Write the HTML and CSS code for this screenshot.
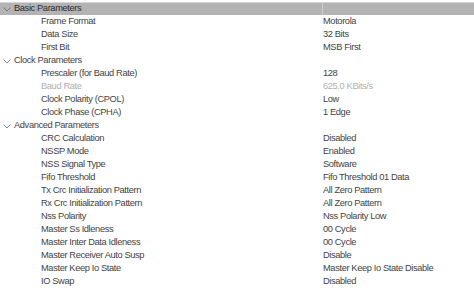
FILE: index.html
```html
<!DOCTYPE html>
<html>
<head>
<meta charset="utf-8">
<link rel="stylesheet" href="styles.css">
</head>
<body>
<div class="tree">
  <div class="row cat selected"><div class="name"><svg class="chev" width="8" height="5" viewBox="0 0 8 5"><path d="M0.5 0.5 L4 4 L7.5 0.5" fill="none" stroke="#7a7a7a" stroke-width="1"/></svg>Basic Parameters</div><div class="val"></div></div>
  <div class="row"><div class="name child">Frame Format</div><div class="val">Motorola</div></div>
  <div class="row"><div class="name child">Data Size</div><div class="val">32 Bits</div></div>
  <div class="row"><div class="name child">First Bit</div><div class="val">MSB First</div></div>
  <div class="row cat"><div class="name"><svg class="chev" width="8" height="5" viewBox="0 0 8 5"><path d="M0.5 0.5 L4 4 L7.5 0.5" fill="none" stroke="#8a8a8a" stroke-width="1"/></svg>Clock Parameters</div><div class="val"></div></div>
  <div class="row"><div class="name child">Prescaler (for Baud Rate)</div><div class="val">128</div></div>
  <div class="row disabled"><div class="name child">Baud Rate</div><div class="val">625.0 KBits/s</div></div>
  <div class="row"><div class="name child">Clock Polarity (CPOL)</div><div class="val">Low</div></div>
  <div class="row"><div class="name child">Clock Phase (CPHA)</div><div class="val">1 Edge</div></div>
  <div class="row cat"><div class="name"><svg class="chev" width="8" height="5" viewBox="0 0 8 5"><path d="M0.5 0.5 L4 4 L7.5 0.5" fill="none" stroke="#8a8a8a" stroke-width="1"/></svg>Advanced Parameters</div><div class="val"></div></div>
  <div class="row"><div class="name child">CRC Calculation</div><div class="val">Disabled</div></div>
  <div class="row"><div class="name child">NSSP Mode</div><div class="val">Enabled</div></div>
  <div class="row"><div class="name child">NSS Signal Type</div><div class="val">Software</div></div>
  <div class="row"><div class="name child">Fifo Threshold</div><div class="val">Fifo Threshold 01 Data</div></div>
  <div class="row"><div class="name child">Tx Crc Initialization Pattern</div><div class="val">All Zero Pattern</div></div>
  <div class="row"><div class="name child">Rx Crc Initialization Pattern</div><div class="val">All Zero Pattern</div></div>
  <div class="row"><div class="name child">Nss Polarity</div><div class="val">Nss Polarity Low</div></div>
  <div class="row"><div class="name child">Master Ss Idleness</div><div class="val">00 Cycle</div></div>
  <div class="row"><div class="name child">Master Inter Data Idleness</div><div class="val">00 Cycle</div></div>
  <div class="row"><div class="name child">Master Receiver Auto Susp</div><div class="val">Disable</div></div>
  <div class="row"><div class="name child">Master Keep Io State</div><div class="val">Master Keep Io State Disable</div></div>
  <div class="row"><div class="name child">IO Swap</div><div class="val">Disabled</div></div>
</div>
</body>
</html>
```
FILE: styles.css
```css
html, body {
  margin: 0;
  padding: 0;
  background: #ffffff;
}
body {
  font-family: "Liberation Sans", Arial, sans-serif;
  font-size: 9.3px;
  letter-spacing: -0.38px;
  color: #434343;
}
.tree {
  padding-top: 2px;
  width: 474px;
}
.row {
  display: grid;
  grid-template-columns: 322px 1fr;
  height: 13px;
  line-height: 13px;
  white-space: nowrap;
}
.name {
  display: flex;
  align-items: center;
  padding-left: 3px;
}
.name.child {
  padding-left: 41px;
}
.chev {
  margin-right: 3px;
  margin-top: 1px;
}
.val {
  padding-left: 1px;
}
.selected {
  background: #b3b3b3;
  box-shadow: inset 0 1px 0 #d6d6d6;
  color: #2e2e2e;
}
.selected .val {
  border-left: 1px solid #cfcfcf;
}
.disabled {
  color: #b0b0b0;
}
```
